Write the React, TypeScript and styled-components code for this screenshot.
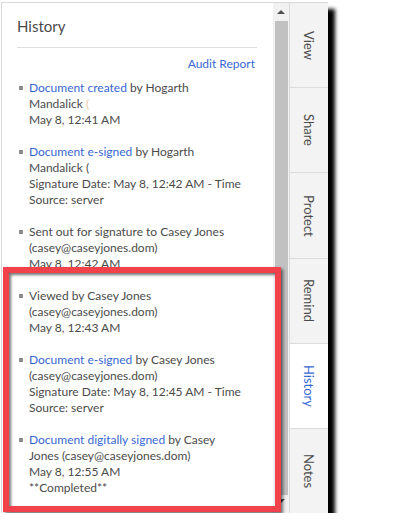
import React from "react";
import styled, { createGlobalStyle } from "styled-components";

const Global = createGlobalStyle`
  html, body { margin: 0; padding: 0; background: #ffffff; }
  body { font-family: Lato, "Liberation Sans", Arial, sans-serif; }
`;

const Frame = styled.div`
  position: relative;
  margin: 2px 0 0 1px;
  width: 327px;
  height: 511px;
  display: flex;
  background: #ffffff;
  border-top: 1px solid #d8d8d8;
  border-left: 1px solid #d8d8d8;
  box-shadow: 7px 7px 4px #000;
  box-sizing: border-box;
`;

const Content = styled.div`
  width: 271px;
  flex: none;
  padding: 0 16px 0 15px;
  box-sizing: border-box;
  overflow: hidden;
  color: #4b4b4b;
`;

const Title = styled.h2`
  margin: 0;
  padding-top: 12px;
  font-size: 15px;
  line-height: 22px;
  font-weight: 400;
  color: #4b4b4b;
`;

const Divider = styled.div`
  margin-top: 10px;
  height: 1px;
  background: #dedede;
`;

const AuditRow = styled.div`
  margin-top: 8px;
  padding-right: 2px;
  text-align: right;
  font-size: 12px;
  line-height: 16px;
`;

const Link = styled.span`
  color: #3868d2;
`;

const List = styled.ul`
  list-style: none;
  margin: 8px 0 0 0;
  padding: 0;
`;

const Item = styled.li`
  position: relative;
  padding-left: 12px;
  margin-bottom: 16px;
  font-size: 12px;
  line-height: 16px;
  color: #4b4b4b;

  &::before {
    content: "";
    position: absolute;
    left: 2px;
    top: 6px;
    width: 4px;
    height: 4px;
    background: #8c8c8c;
  }
`;

const Faint = styled.span`
  color: #f3c9a4;
`;

const Scrollbar = styled.div`
  width: 16px;
  flex: none;
  background: #f1f1f1;
  display: flex;
  flex-direction: column;
  align-items: center;
`;

const Arrow = styled.div<{ $down?: boolean }>`
  margin: ${(p) => (p.$down ? "4px 0 0" : "7px 0 0")};
  width: 0;
  height: 0;
  border-left: 4px solid transparent;
  border-right: 4px solid transparent;
  ${(p) =>
    p.$down ? "border-top: 4px solid #505050;" : "border-bottom: 4px solid #505050;"}
`;

const Thumb = styled.div`
  margin-top: 7px;
  width: 13px;
  height: 474px;
  background: #c1c1c1;
`;

const Tabs = styled.div`
  width: 39px;
  flex: none;
  display: flex;
  flex-direction: column;
  border-left: 1px solid #dcdcdc;
  box-sizing: border-box;
`;

const Tab = styled.div<{ $active?: boolean }>`
  flex: 1;
  display: flex;
  align-items: center;
  justify-content: center;
  background: ${(p) => (p.$active ? "#ffffff" : "#f3f3f3")};
  border-bottom: 1px solid #dcdcdc;
  color: ${(p) => (p.$active ? "#3868d2" : "#4b4b4b")};
  font-size: 13px;
  writing-mode: vertical-rl;
  &:last-child { border-bottom: none; }
`;

const Highlight = styled.div`
  position: absolute;
  left: 1px;
  top: 264px;
  width: 278px;
  height: 245px;
  border: 6px solid #f1414b;
  box-sizing: border-box;
  box-shadow: 2px 2px 3px rgba(0, 0, 0, 0.55), inset 2px 2px 3px rgba(0, 0, 0, 0.55);
  pointer-events: none;
`;

const tabs = ["View", "Share", "Protect", "Remind", "History", "Notes"];

export default function App() {
  return (
    <>
      <Global />
      <Frame>
        <Content>
          <Title>History</Title>
          <Divider />
          <AuditRow>
            <Link>Audit Report</Link>
          </AuditRow>
          <List>
            <Item>
              <Link>Document created</Link> by Hogarth
              <br />
              Mandalick <Faint>(</Faint>
              <br />
              May 8, 12:41 AM
            </Item>
            <Item>
              <Link>Document e-signed</Link> by Hogarth
              <br />
              Mandalick (
              <br />
              Signature Date: May 8, 12:42 AM - Time
              <br />
              Source: server
            </Item>
            <Item>
              Sent out for signature to Casey Jones
              <br />
              (casey@caseyjones.dom)
              <br />
              May 8, 12:42 AM
            </Item>
            <Item>
              Viewed by Casey Jones
              <br />
              (casey@caseyjones.dom)
              <br />
              May 8, 12:43 AM
            </Item>
            <Item>
              <Link>Document e-signed</Link> by Casey Jones
              <br />
              (casey@caseyjones.dom)
              <br />
              Signature Date: May 8, 12:45 AM - Time
              <br />
              Source: server
            </Item>
            <Item>
              <Link>Document digitally signed</Link> by Casey
              <br />
              Jones (casey@caseyjones.dom)
              <br />
              May 8, 12:55 AM
              <br />
              **Completed**
            </Item>
          </List>
        </Content>
        <Scrollbar>
          <Arrow />
          <Thumb />
          <Arrow $down />
        </Scrollbar>
        <Tabs>
          {tabs.map((t) => (
            <Tab key={t} $active={t === "History"}>
              {t}
            </Tab>
          ))}
        </Tabs>
        <Highlight />
      </Frame>
    </>
  );
}
